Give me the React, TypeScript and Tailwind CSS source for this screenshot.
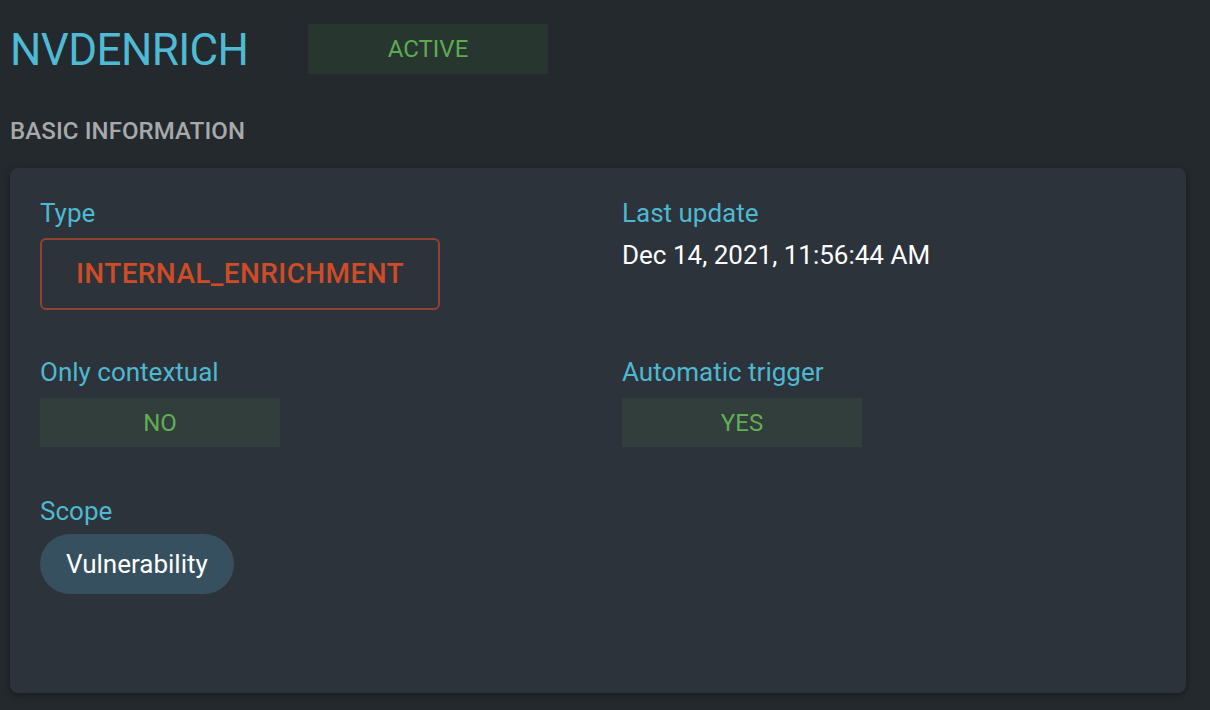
export default function App() {
  return (
    <div className="min-h-screen bg-[#23292d] px-[10px] pt-6 font-['Roboto',sans-serif]">
      <div className="flex items-center h-[49px]">
        <h1 className="w-[298px] pt-[2px] text-[44px] leading-none text-[#4fbad4] tracking-[-0.6px]">NVDENRICH</h1>
        <div className="w-[240px] h-[50px] pt-[1px] flex items-center justify-center bg-[#283630] text-[24px] text-[#5eaa51]">
          ACTIVE
        </div>
      </div>

      <h2 className="mt-[44px] mb-[23px] text-[24px] leading-[28px] font-medium tracking-[0.1px] text-[#a7a9ab]">BASIC INFORMATION</h2>

      <div className="w-[1176px] h-[525px] rounded-lg bg-[#2c333a] shadow-[0_2px_6px_rgba(0,0,0,0.35)] px-[30px] pt-[31px]">
        <div className="grid grid-cols-2 gap-x-12 gap-y-12">
          <div>
            <div className="text-[26px] leading-[28px] text-[#4fb8d1]">Type</div>
            <div className="mt-[11px] w-[400px] h-[72px] rounded-md border-2 border-[#8f4330] flex items-center justify-center text-[28px] font-medium tracking-[0.4px] text-[#cf4c27]">
              INTERNAL_ENRICHMENT
            </div>
          </div>
          <div>
            <div className="text-[26px] leading-[28px] text-[#4fb8d1]">Last update</div>
            <div className="mt-[14px] text-[26px] leading-[28px] text-white">Dec 14, 2021, 11:56:44 AM</div>
          </div>

          <div>
            <div className="text-[26px] leading-[28px] text-[#4fb8d1]">Only contextual</div>
            <div className="mt-3 w-[240px] h-[49px] flex items-center justify-center bg-[#313e3c] text-[24px] text-[#62ad55]">
              NO
            </div>
          </div>
          <div>
            <div className="text-[26px] leading-[28px] text-[#4fb8d1]">Automatic trigger</div>
            <div className="mt-3 w-[240px] h-[49px] flex items-center justify-center bg-[#313e3c] text-[24px] text-[#62ad55]">
              YES
            </div>
          </div>

          <div>
            <div className="mt-[2px] text-[26px] leading-[28px] text-[#4fb8d1]">Scope</div>
            <div className="mt-[9px] inline-flex h-[60px] items-center rounded-full bg-[#36505f] px-[26px] text-[26px] text-white">
              Vulnerability
            </div>
          </div>
        </div>
      </div>
    </div>
  );
}
